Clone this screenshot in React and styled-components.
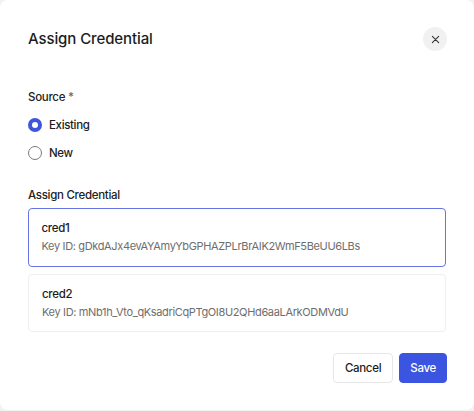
import React, { useState } from "react";
import styled, { createGlobalStyle } from "styled-components";

const GlobalStyle = createGlobalStyle`
  html, body {
    margin: 0;
    padding: 0;
    background: #f2f2f2;
  }
  body {
    font-family: Inter, "Noto Sans", "Liberation Sans", sans-serif;
    color: #1c1c1c;
  }
`;

const credentials = [
  { name: "cred1", keyId: "gDkdAJx4evAYAmyYbGPHAZPLrBrAIK2WmF5BeUU6LBs" },
  { name: "cred2", keyId: "mNb1h_Vto_qKsadriCqPTgOI8U2QHd6aaLArkODMVdU" },
];

const App = () => {
  const [source, setSource] = useState("existing");
  const [selected, setSelected] = useState("cred1");

  return (
    <>
      <GlobalStyle />
      <Dialog>
        <Header>
          <Title>Assign Credential</Title>
          <CloseButton aria-label="Close">
            <svg width="9" height="9" viewBox="0 0 10 10">
              <path
                d="M1.5 1.5 L8.5 8.5 M8.5 1.5 L1.5 8.5"
                stroke="#333"
                strokeWidth="1.2"
                strokeLinecap="round"
              />
            </svg>
          </CloseButton>
        </Header>

        <Field>
          <Label>
            Source <Required>*</Required>
          </Label>
          <RadioGroup>
            <RadioRow onClick={() => setSource("existing")}>
              <RadioDot checked={source === "existing"} />
              Existing
            </RadioRow>
            <RadioRow onClick={() => setSource("new")}>
              <RadioDot checked={source === "new"} />
              New
            </RadioRow>
          </RadioGroup>
        </Field>

        <CredField>
          <Label>Assign Credential</Label>
          <CardList>
            {credentials.map((c) => (
              <Card
                key={c.name}
                active={selected === c.name}
                onClick={() => setSelected(c.name)}
              >
                <CardName>{c.name}</CardName>
                <CardKey>Key ID: {c.keyId}</CardKey>
              </Card>
            ))}
          </CardList>
        </CredField>

        <Footer>
          <Button>Cancel</Button>
          <Button primary>Save</Button>
        </Footer>
      </Dialog>
    </>
  );
};

const Dialog = styled.div`
  width: 474px;
  height: 410px;
  box-sizing: border-box;
  background: #fff;
  border-radius: 8px;
  padding: 27px 28px 0 28px;
  display: flex;
  flex-direction: column;
`;

const Header = styled.div`
  display: flex;
  align-items: center;
  justify-content: space-between;
  height: 24px;
`;

const Title = styled.h2`
  margin: 0;
  font-size: 15px;
  font-weight: 500;
  letter-spacing: -0.1px;
  margin-top: -2px;
`;

const CloseButton = styled.button`
  width: 24px;
  height: 24px;
  margin-right: -1px;
  border-radius: 50%;
  border: none;
  background: #f1f1f1;
  display: flex;
  align-items: center;
  justify-content: center;
  padding: 0;
  cursor: pointer;
`;

const Field = styled.div`
  margin-top: 38px;
  display: flex;
  flex-direction: column;
`;

const CredField = styled(Field)`
  margin-top: 26px;
`;

const Label = styled.div`
  font-size: 11.5px;
  font-weight: 500;
  line-height: 16px;
  letter-spacing: -0.3px;
  color: #222;
`;

const Required = styled.span`
  color: #666;
`;

const RadioGroup = styled.div`
  display: flex;
  flex-direction: column;
  gap: 12px;
  margin-top: 12px;
`;

const RadioRow = styled.label`
  display: flex;
  align-items: center;
  gap: 7px;
  font-size: 11.5px;
  font-weight: 500;
  line-height: 16px;
  letter-spacing: -0.35px;
  cursor: pointer;
`;

const RadioDot = styled.span`
  width: 14px;
  height: 14px;
  box-sizing: border-box;
  border-radius: 50%;
  border: ${(p) => (p.checked ? "4px solid #3e55dc" : "1.5px solid #7a7a7a")};
  background: #fff;
  flex-shrink: 0;
`;

const CardList = styled.div`
  display: flex;
  flex-direction: column;
  gap: 7px;
  margin-top: 5px;
`;

const Card = styled.div`
  box-sizing: border-box;
  height: ${(p) => (p.active ? "59px" : "58px")};
  border-radius: 4px;
  border: ${(p) => (p.active ? "1.5px solid #6474e4" : "1px solid #efefef")};
  padding: 0 0 0 ${(p) => (p.active ? "12.5px" : "13px")};
  display: flex;
  flex-direction: column;
  justify-content: center;
  gap: 3px;
  cursor: pointer;
`;

const CardName = styled.div`
  font-size: 11.5px;
  font-weight: 500;
  line-height: 15px;
  letter-spacing: -0.3px;
  color: #1c1c1c;
`;

const CardKey = styled.div`
  font-size: 11px;
  line-height: 15px;
  letter-spacing: -0.35px;
  color: #6e6e6e;
`;

const Footer = styled.div`
  margin-top: 21px;
  display: flex;
  justify-content: flex-end;
  gap: 6px;
  margin-right: -1px;
`;

const Button = styled.button`
  height: 30px;
  padding: 0 ${(p) => (p.primary ? "10px" : "11px")};
  border-radius: 4px;
  font-family: inherit;
  font-size: 11.5px;
  font-weight: 500;
  letter-spacing: -0.3px;
  border: 1px solid ${(p) => (p.primary ? "#3b55e0" : "#e6e6e6")};
  background: ${(p) => (p.primary ? "#3b55e0" : "#fff")};
  color: ${(p) => (p.primary ? "#fff" : "#1c1c1c")};
  cursor: pointer;
`;

export default App;
